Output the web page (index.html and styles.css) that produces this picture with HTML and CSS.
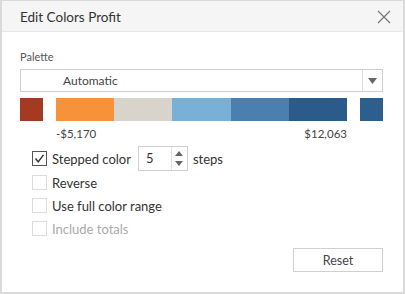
FILE: index.html
```html
<!DOCTYPE html>
<html lang="en">
<head>
  <meta charset="UTF-8">
  <title>Edit Colors Profit</title>
  <link rel="stylesheet" href="styles.css">
</head>
<body>
  <div class="dialog">
    <div class="header">
      <span class="title">Edit Colors Profit</span>
      <svg class="close" width="14" height="14" viewBox="0 0 14 14"><path d="M1 1L13 13M13 1L1 13" stroke="#777" stroke-width="1.2" fill="none"/></svg>
    </div>
    <div class="content">
      <div class="label">Palette</div>
      <div class="select">
        <span class="select-text">Automatic</span>
        <span class="select-arrow"><svg width="9" height="6" viewBox="0 0 9 6"><path d="M0 0H9L4.5 6Z" fill="#666"/></svg></span>
      </div>
      <div class="ramp">
        <div class="swatch red"></div>
        <div class="bar">
          <div class="step c1"></div>
          <div class="step c2"></div>
          <div class="step c3"></div>
          <div class="step c4"></div>
          <div class="step c5"></div>
        </div>
        <div class="swatch blue"></div>
      </div>
      <div class="range">
        <span>-$5,170</span>
        <span>$12,063</span>
      </div>
      <div class="options">
        <div class="option">
          <span class="check checked"><svg width="13" height="13" viewBox="0 0 13 13"><path d="M2.5 6.5L5.2 9.8L10.5 2.8" stroke="#333" stroke-width="1.4" fill="none"/></svg></span>
          <span>Stepped color</span>
          <div class="spin">
            <span class="spin-val">5</span>
            <span class="spin-btns">
              <svg width="8" height="5" viewBox="0 0 8 5"><path d="M0 5L4 0L8 5Z" fill="#666"/></svg>
              <svg width="8" height="5" viewBox="0 0 8 5"><path d="M0 0H8L4 5Z" fill="#666"/></svg>
            </span>
          </div>
          <span>steps</span>
        </div>
        <div class="option"><span class="check"></span><span>Reverse</span></div>
        <div class="option"><span class="check"></span><span>Use full color range</span></div>
        <div class="option disabled"><span class="check"></span><span>Include totals</span></div>
      </div>
      <div class="footer">
        <button class="btn">Reset</button>
      </div>
    </div>
  </div>
</body>
</html>
```

FILE: styles.css
```css
body { margin: 0; font-family: Lato, "Open Sans", sans-serif; color: #333; background: #fff; }
.dialog { width: 405px; height: 294px; box-sizing: border-box; border: 2px solid #dadada; border-top-width: 1px; background: #fff; }
.header { height: 31px; background: #f5f5f5; border-bottom: 1px solid #e8e8e8; display: flex; align-items: center; justify-content: space-between; padding: 0 12px 0 18px; box-sizing: border-box; }
.title { font-size: 13.5px; color: #333; padding-top: 2px; }
.close { margin-top: 1px; }
.content { padding: 18px 20px 0 18px; }
.label { font-size: 11px; line-height: 14px; color: #555; height: 14px; }
.select { margin-top: 5px; height: 23px; border: 1px solid #cfcfcf; box-sizing: border-box; display: flex; align-items: center; }
.select-text { flex: 1; padding-left: 42px; font-size: 12px; color: #444; }
.select-arrow { width: 19px; height: 21px; border-left: 1px solid #dcdcdc; display: flex; align-items: center; justify-content: center; }
.ramp { display: flex; margin-top: 6px; height: 23px; }
.swatch { width: 23px; }
.red { background: #a33b22; }
.blue { background: #2d5f8e; margin-left: 13px; }
.bar { display: flex; margin-left: 13px; width: 291px; }
.step { flex: 1; }
.c1 { background: #f6923a; }
.c2 { background: #d8d4cb; }
.c3 { background: #79b0d8; }
.c4 { background: #4a7fb0; }
.c5 { background: #2b5b8b; }
.range { display: flex; justify-content: space-between; width: 291px; margin-left: 36px; margin-top: 6px; font-size: 11.5px; line-height: 14px; color: #444; }
.options { margin-top: 5px; padding-left: 12px; }
.option { display: flex; align-items: center; height: 23px; font-size: 13px; line-height: 16px; color: #333; }
.option:first-child { height: 25px; }
.check { width: 15px; height: 15px; box-sizing: border-box; border: 1px solid #dcdcdc; margin-right: 5px; display: flex; align-items: center; justify-content: center; }
.check.checked { border-color: #555; }
.disabled { color: #aaa; }
.spin { display: flex; width: 50px; height: 25px; box-sizing: border-box; border: 1px solid #cfcfcf; margin: 0 5px 0 7px; }
.spin-val { flex: 1; padding-left: 7px; line-height: 23px; }
.spin-btns { width: 15px; border-left: 1px solid #e2e2e2; display: flex; flex-direction: column; justify-content: space-evenly; align-items: center; }
.footer { display: flex; justify-content: flex-end; margin-top: 8px; }
.btn { width: 90px; height: 24px; background: #fff; border: 1px solid #cfcfcf; font-family: Lato, "Open Sans", sans-serif; font-size: 12.5px; color: #444; }
```
